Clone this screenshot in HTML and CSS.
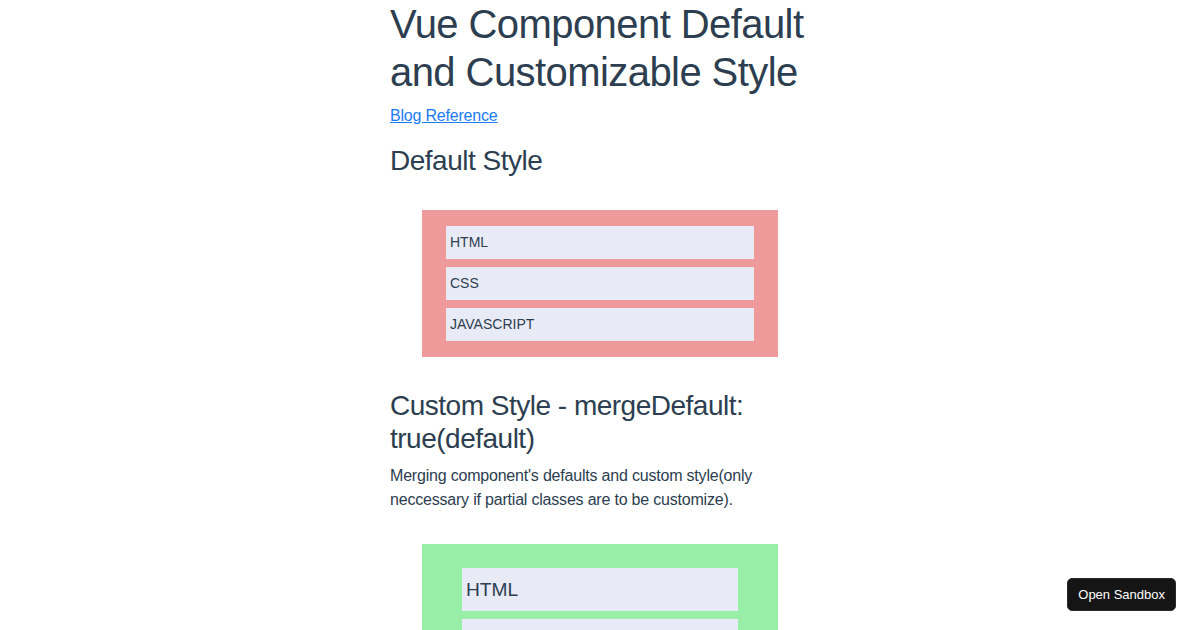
FILE: index.html
```html
<!DOCTYPE html>
<html lang="en">
<head>
<meta charset="utf-8">
<title>Vue Component Default and Customizable Style</title>
<link rel="stylesheet" href="styles.css">
</head>
<body>
<div class="app">
  <h1 class="title">Vue Component Default and Customizable Style</h1>
  <p><a class="ref" href="#">Blog Reference</a></p>
  <h2 class="heading">Default Style</h2>
  <ul class="list list-default">
    <li class="item">HTML</li>
    <li class="item">CSS</li>
    <li class="item">JAVASCRIPT</li>
  </ul>
  <h2 class="heading">Custom Style - mergeDefault: true(default)</h2>
  <p class="text">Merging component's defaults and custom style(only neccessary if partial classes are to be customize).</p>
  <ul class="list list-custom">
    <li class="item item-custom">HTML</li>
    <li class="item item-custom">CSS</li>
    <li class="item item-custom">JAVASCRIPT</li>
  </ul>
</div>
<button class="sandbox">Open Sandbox</button>
</body>
</html>
```
FILE: styles.css
```css
html, body {
  margin: 0;
  padding: 0;
  background: #ffffff;
}
body {
  font-family: "Liberation Sans", Arial, Helvetica, sans-serif;
  font-size: 16px;
  line-height: 1.5;
  color: #2c3e50;
}
.app {
  width: 420px;
  margin: 0 auto;
}
.title {
  font-size: 40px;
  font-weight: 400;
  line-height: 48px;
  letter-spacing: -0.57px;
  margin: 0 0 8px;
}
p {
  margin: 0 0 16px;
}
.text {
  letter-spacing: -0.2px;
}
.ref {
  color: #1a7bf5;
  text-decoration: underline;
  letter-spacing: -0.2px;
}
.heading {
  font-size: 28px;
  font-weight: 400;
  line-height: 1.2;
  letter-spacing: -0.5px;
  margin: 0 0 8px;
}
.list {
  list-style: none;
  margin: 32px 32px;
  display: flex;
  flex-direction: column;
  gap: 8px;
}
.list-default {
  background: #ef9a9a;
  padding: 16px 24px;
}
.list-custom {
  background: #9aefa8;
  padding: 24px 40px;
}
.item {
  background: #e8eaf6;
  font-size: 14px;
  line-height: 21px;
  padding: 6px 4px;
}
.item-custom {
  font-size: 19.2px;
  line-height: 29px;
  padding: 7px 4px;
}
.sandbox {
  position: fixed;
  right: 24px;
  bottom: 19px;
  height: 33px;
  padding: 0 10px;
  background: #151515;
  color: #ffffff;
  border: 1px solid #2a2a2a;
  border-radius: 5px;
  font-family: "Liberation Sans", Arial, sans-serif;
  font-size: 13px;
}
```
